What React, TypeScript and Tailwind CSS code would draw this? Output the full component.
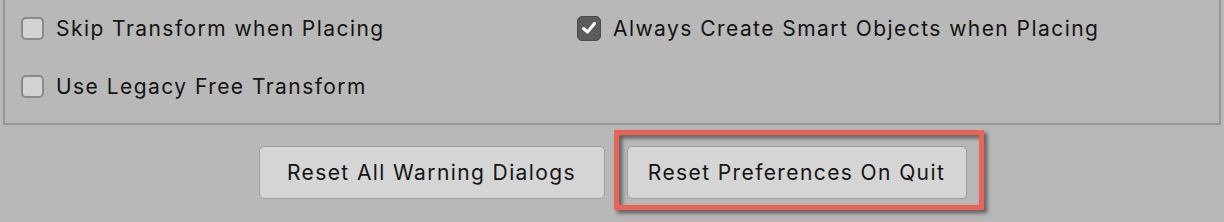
import React from "react";

function Box({ checked }: { checked?: boolean }) {
  if (checked) {
    return (
      <div className="w-[24px] h-[25px] rounded-[5px] bg-[#5c5c5c] border border-[#4a4a4a] flex items-center justify-center shrink-0">
        <svg width="16" height="14" viewBox="0 0 16 14">
          <path d="M2.5 7.5 L6.5 11 L13.5 2.5" fill="none" stroke="#ffffff" strokeWidth="3" strokeLinecap="round" strokeLinejoin="round" />
        </svg>
      </div>
    );
  }
  return <div className="w-[23px] h-[23px] rounded-[5px] bg-[#d3d3d3] border-2 border-[#8a8a8a] shrink-0" />;
}

function Item({ label, checked }: { label: string; checked?: boolean }) {
  return (
    <div className="flex items-center gap-[12px] h-[24px]">
      <Box checked={checked} />
      <span className="text-[21px] leading-none tracking-[1.45px] text-[#141414]">{label}</span>
    </div>
  );
}

export default function App() {
  return (
    <div
      className="w-[1224px] h-[222px] bg-[#b8b8b8] overflow-hidden"
      style={{ fontFamily: 'Inter, "Liberation Sans", Arial, sans-serif' }}
    >
      <div className="mx-[3px] h-[125px] border-x-2 border-b-2 border-[#979797] grid grid-cols-[556px_1fr] grid-rows-[24px_24px] gap-y-[34px] pl-[16px] pt-[16px]">
        <Item label="Skip Transform when Placing" />
        <Item label="Always Create Smart Objects when Placing" checked />
        <Item label="Use Legacy Free Transform" />
      </div>
      <div className="flex justify-center gap-[22px] pt-[21px] pl-[1px]">
        <button className="w-[346px] h-[53px] rounded-[5px] bg-[#d5d5d5] border border-[#9d9d9d] text-[21px] tracking-[1.4px] text-[#141414]">
          Reset All Warning Dialogs
        </button>
        <div className="relative">
          <button className="w-[340px] h-[53px] rounded-[5px] bg-[#d5d5d5] border border-[#9d9d9d] text-[21px] tracking-[1.4px] text-[#141414]">
            Reset Preferences On Quit
          </button>
          <div className="absolute left-[-13px] top-[-16px] w-[370px] h-[80px] border-[5px] border-[#ea6456] drop-shadow-[3px_3px_2px_rgba(0,0,0,0.55)] pointer-events-none" />
        </div>
      </div>
    </div>
  );
}
